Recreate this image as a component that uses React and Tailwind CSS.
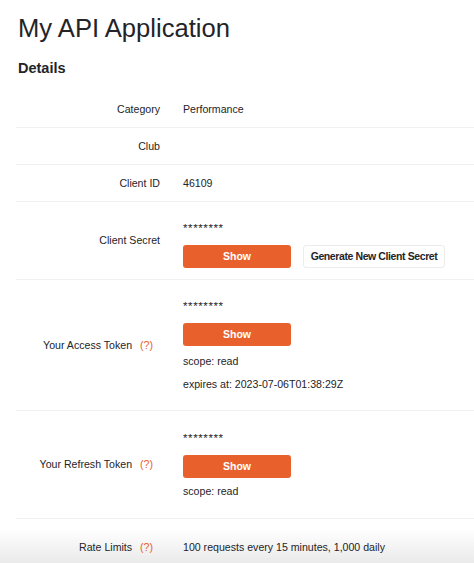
import React from "react";

const Q = () => (
  <span className="ml-[8px] mr-[7px] text-[#e8602c]">(?)</span>
);

const ShowBtn = () => (
  <button className="w-[108px] h-[23px] rounded-[3px] bg-[#e8602c] text-white font-bold text-[10.5px] leading-[13px]">
    Show
  </button>
);

const Stars = () => (
  <span className="text-[11.5px] tracking-[0.6px]">********</span>
);

function Row({ label, q, children, className = "", valueClass = "" }) {
  return (
    <div className={`flex items-center border-b border-[#f0f0f0] ${className}`}>
      <div className="w-[144px] shrink-0 text-right">
        {label}
        {q && <Q />}
      </div>
      <div className={`ml-[23px] flex flex-col ${valueClass}`}>{children}</div>
    </div>
  );
}

export default function App() {
  return (
    <div
      className="relative w-[474px] h-[563px] overflow-hidden bg-white text-[#242428]"
      style={{ fontFamily: "'Liberation Sans', Arial, sans-serif" }}
    >
      <div className="pointer-events-none absolute left-0 right-0 bottom-0 h-[34px] bg-gradient-to-b from-white to-[#eaeaea]" />
      <div className="relative">
        <div className="pl-[18px] pt-[13px]">
          <h1 className="text-[25.6px] leading-[30px] font-normal">My API Application</h1>
          <h2 className="mt-[16px] text-[14.5px] leading-[18px] font-bold">Details</h2>
        </div>
        <div className="ml-[16px] mt-[14px] text-[10.6px] leading-[13px]">
          <Row label="Category" className="h-[37px]">
            <span>Performance</span>
          </Row>
          <Row label="Club" className="h-[37px]">
            <span></span>
          </Row>
          <Row label="Client ID" className="h-[37px]">
            <span>46109</span>
          </Row>
          <Row label="Client Secret" className="h-[78px]" valueClass="pt-[9px]">
            <Stars />
            <div className="mt-[10px] flex gap-[12px]">
              <ShowBtn />
              <button className="w-[142px] h-[23px] whitespace-nowrap rounded-[3px] bg-white border border-[#ececec] font-bold text-[10.5px] tracking-[-0.4px] leading-[13px]">
                Generate New Client Secret
              </button>
            </div>
          </Row>
          <Row label="Your Access Token" q className="h-[131px]">
            <Stars />
            <div className="mt-[10px]">
              <ShowBtn />
            </div>
            <span className="mt-[9px]">scope: read</span>
            <span className="mt-[10px]">expires at: 2023-07-06T01:38:29Z</span>
          </Row>
          <Row label="Your Refresh Token" q className="h-[108px]">
            <Stars />
            <div className="mt-[10px]">
              <ShowBtn />
            </div>
            <span className="mt-[7px]">scope: read</span>
          </Row>
          <Row label="Rate Limits" q className="h-[57px] border-b-0">
            <span>100 requests every 15 minutes, 1,000 daily</span>
          </Row>
        </div>
      </div>
    </div>
  );
}
